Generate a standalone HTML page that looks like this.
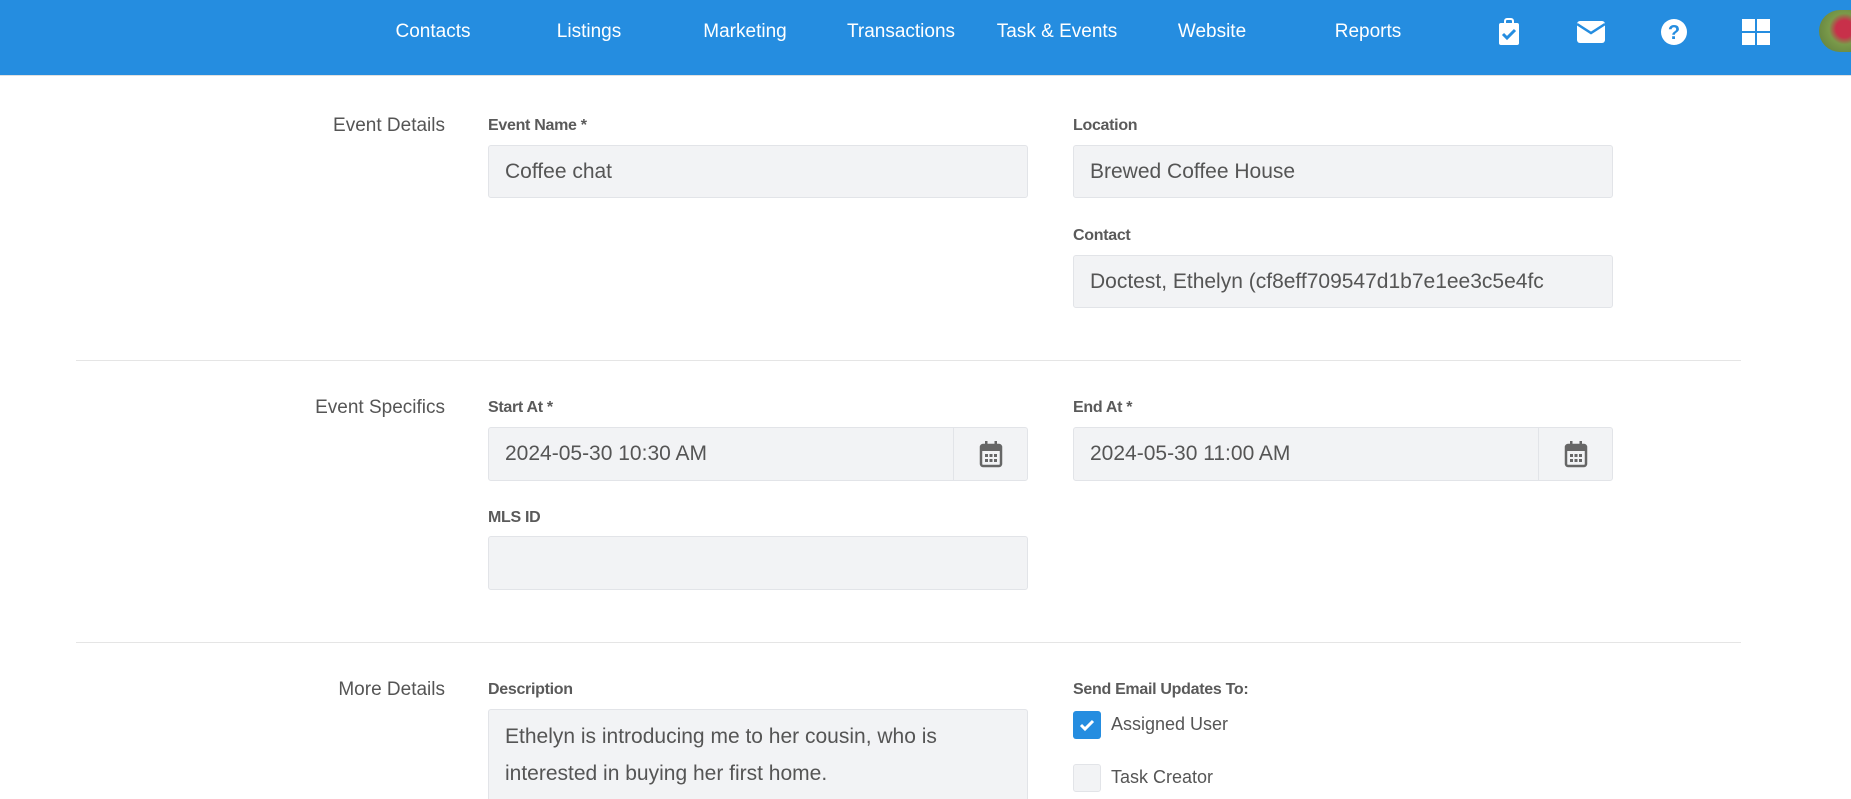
<!DOCTYPE html>
<html style="width:1851px;height:799px;overflow:hidden"><head><meta charset="utf-8"><style>
*{box-sizing:border-box;margin:0;padding:0}
body{width:1851px;height:799px;overflow:hidden;background:#fff;font-family:"Liberation Sans",sans-serif;color:#555;position:relative}
.nav{position:absolute;left:0;top:0;width:1851px;height:76px;background:#258de0;border-bottom:1px solid #e0e0e0}
.nav span{position:absolute;top:21px;color:#fff;font-size:19px;transform:translateX(-50%);white-space:nowrap}
.ic{position:absolute;top:18px}
.sec{position:absolute;right:1406px;font-size:19px;color:#555;text-align:right;white-space:nowrap}
.lbl{position:absolute;font-size:16px;font-weight:bold;color:#5a5a5a;white-space:nowrap;letter-spacing:-0.3px}
.inp{position:absolute;background:#f2f3f5;border:1px solid #e2e4e8;border-radius:3px;font-size:21px;color:#555;padding-left:16px;display:flex;align-items:center;white-space:nowrap;overflow:hidden}
.hr{position:absolute;left:76px;width:1665px;height:1px;background:#e5e5e5}
.add{position:absolute;background:#f2f3f5;border:1px solid #e2e4e8;border-radius:0 3px 3px 0;display:flex;align-items:center;justify-content:center}
.cb{position:absolute;width:28px;height:28px;border-radius:3px}
.cbt{position:absolute;font-size:18px;color:#555}
</style></head><body>
<div class="nav">
<span style="left:433px">Contacts</span>
<span style="left:589px">Listings</span>
<span style="left:745px">Marketing</span>
<span style="left:901px">Transactions</span>
<span style="left:1057px">Task &amp; Events</span>
<span style="left:1212px">Website</span>
<span style="left:1368px">Reports</span>
<svg class="ic" style="left:1498px" width="22" height="28" viewBox="0 0 22 28"><rect x="1" y="5" width="20" height="22" rx="2" fill="#fff"/><rect x="7" y="1" width="8" height="6" rx="2" fill="none" stroke="#fff" stroke-width="2"/><path d="M5 16l4 4 8-8" stroke="#258de0" stroke-width="3" fill="none"/></svg>
<svg class="ic" style="left:1577px;top:21px" width="28" height="22" viewBox="0 0 28 22"><rect x="0" y="0" width="28" height="22" rx="3" fill="#fff"/><path d="M0 3l14 9 14-9" stroke="#258de0" stroke-width="2.5" fill="none"/></svg>
<svg class="ic" style="left:1660px" width="28" height="28" viewBox="0 0 28 28"><circle cx="14" cy="14" r="13" fill="#fff"/><text x="14" y="21" text-anchor="middle" font-family="Liberation Sans" font-weight="bold" font-size="20" fill="#258de0">?</text></svg>
<svg class="ic" style="left:1742px;top:19px" width="28" height="26" viewBox="0 0 28 26"><rect x="0" y="0" width="13" height="12" fill="#fff"/><rect x="15" y="0" width="13" height="12" fill="#fff"/><rect x="0" y="14" width="13" height="12" fill="#fff"/><rect x="15" y="14" width="13" height="12" fill="#fff"/></svg>
<div style="position:absolute;left:1819px;top:10px;width:32px;height:42px;border-radius:21px 0 0 21px;background:radial-gradient(circle at 80% 45%,#c8304a 0 25%,#7a9a4a 45%,#5c7a3a 100%)"></div>
</div>

<div class="sec" style="top:115px">Event Details</div>
<div class="lbl" style="left:488px;top:117px">Event Name *</div>
<div class="inp" style="left:488px;top:145px;width:540px;height:53px">Coffee chat</div>
<div class="lbl" style="left:1073px;top:117px">Location</div>
<div class="inp" style="left:1073px;top:145px;width:540px;height:53px">Brewed Coffee House</div>
<div class="lbl" style="left:1073px;top:227px">Contact</div>
<div class="inp" style="left:1073px;top:255px;width:540px;height:53px">Doctest, Ethelyn (cf8eff709547d1b7e1ee3c5e4fc</div>

<div class="hr" style="top:360px"></div>

<div class="sec" style="top:397px">Event Specifics</div>
<div class="lbl" style="left:488px;top:399px">Start At *</div>
<div class="inp" style="left:488px;top:427px;width:466px;height:54px;border-radius:3px 0 0 3px">2024-05-30 10:30 AM</div>
<div class="add" style="left:953px;top:427px;width:75px;height:54px"><svg width="24" height="28" viewBox="0 0 24 28"><rect x="2" y="5" width="20" height="21" rx="2" fill="none" stroke="#666" stroke-width="2.5"/><rect x="2" y="5" width="20" height="6" fill="#666"/><rect x="6" y="1" width="2.5" height="6" fill="#666"/><rect x="15.5" y="1" width="2.5" height="6" fill="#666"/><g fill="#666"><rect x="6" y="14" width="3" height="3"/><rect x="10.5" y="14" width="3" height="3"/><rect x="15" y="14" width="3" height="3"/><rect x="6" y="19" width="3" height="3"/><rect x="10.5" y="19" width="3" height="3"/><rect x="15" y="19" width="3" height="3"/></g></svg></div>
<div class="lbl" style="left:1073px;top:399px">End At *</div>
<div class="inp" style="left:1073px;top:427px;width:466px;height:54px;border-radius:3px 0 0 3px">2024-05-30 11:00 AM</div>
<div class="add" style="left:1538px;top:427px;width:75px;height:54px"><svg width="24" height="28" viewBox="0 0 24 28"><rect x="2" y="5" width="20" height="21" rx="2" fill="none" stroke="#666" stroke-width="2.5"/><rect x="2" y="5" width="20" height="6" fill="#666"/><rect x="6" y="1" width="2.5" height="6" fill="#666"/><rect x="15.5" y="1" width="2.5" height="6" fill="#666"/><g fill="#666"><rect x="6" y="14" width="3" height="3"/><rect x="10.5" y="14" width="3" height="3"/><rect x="15" y="14" width="3" height="3"/><rect x="6" y="19" width="3" height="3"/><rect x="10.5" y="19" width="3" height="3"/><rect x="15" y="19" width="3" height="3"/></g></svg></div>
<div class="lbl" style="left:488px;top:509px">MLS ID</div>
<div class="inp" style="left:488px;top:536px;width:540px;height:54px"></div>

<div class="hr" style="top:642px"></div>

<div class="sec" style="top:679px">More Details</div>
<div class="lbl" style="left:488px;top:681px">Description</div>
<div class="inp" style="left:488px;top:709px;width:540px;height:90px;border-bottom:none;border-radius:3px 3px 0 0;align-items:flex-start;padding-top:8px;line-height:37px;white-space:normal">Ethelyn is introducing me to her cousin, who is interested in buying her first home.</div>
<div class="lbl" style="left:1073px;top:681px">Send Email Updates To:</div>
<div class="cb" style="left:1073px;top:711px;background:#258de0"><svg width="28" height="28" viewBox="0 0 28 28"><path d="M8 14l4 4 8-8" stroke="#fff" stroke-width="3" fill="none"/></svg></div>
<div class="cbt" style="left:1111px;top:714px">Assigned User</div>
<div class="cb" style="left:1073px;top:764px;background:#f2f3f5;border:1px solid #e2e4e8"></div>
<div class="cbt" style="left:1111px;top:767px">Task Creator</div>
</body></html>
